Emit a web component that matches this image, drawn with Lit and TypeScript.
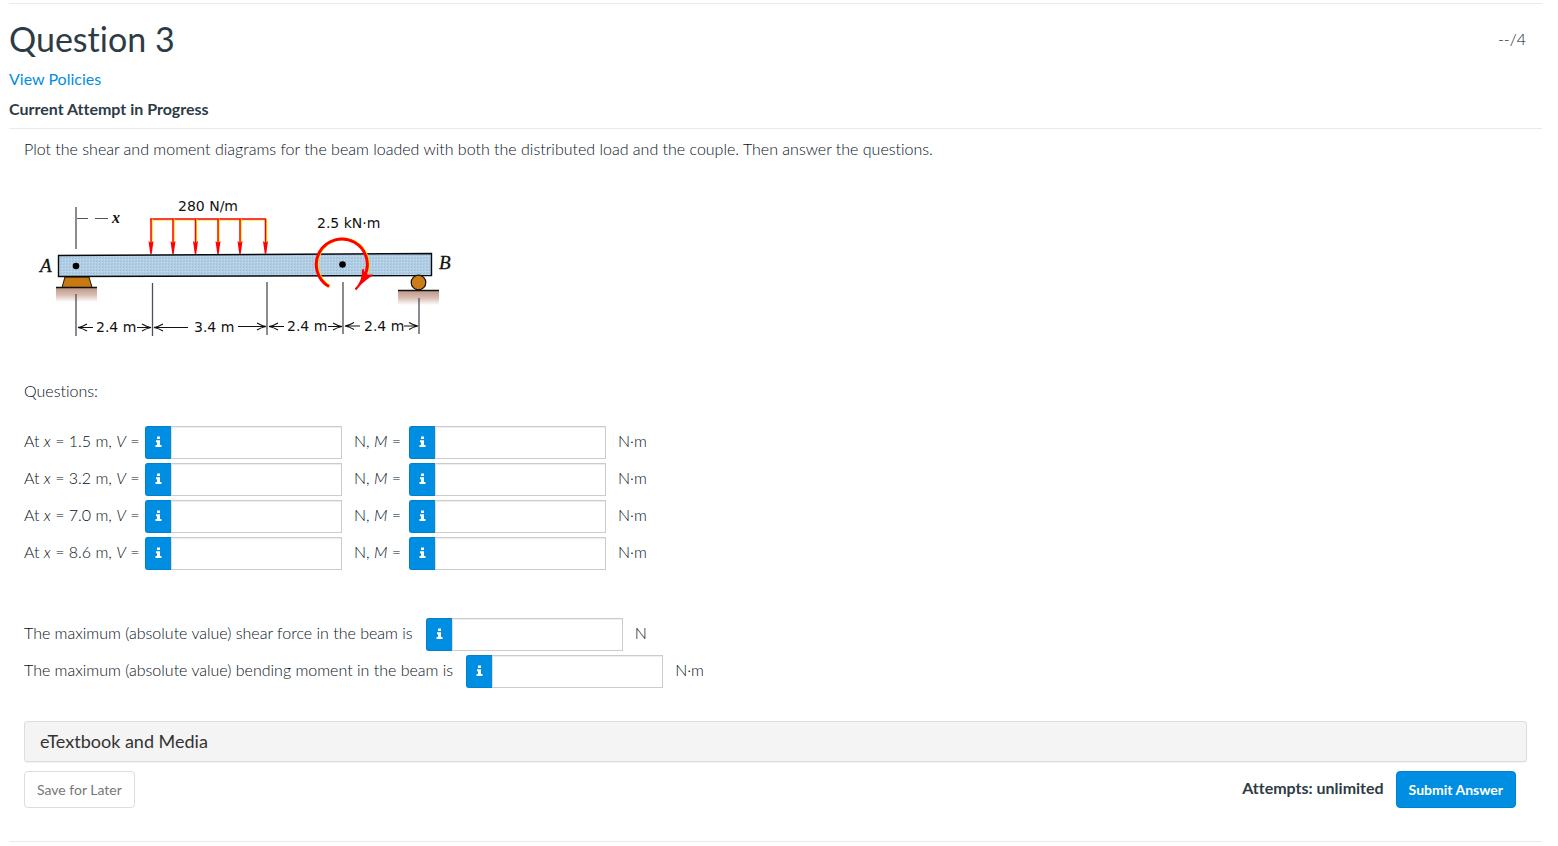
import { LitElement, html, svg, css } from "lit";
import { customElement, property } from "lit/decorators.js";

@customElement("beam-diagram")
class BeamDiagram extends LitElement {
  static styles = css`
    :host { display: block; }
    .drawing { display: block; width: 440px; height: 150px; }
    .value { font-family: "DejaVu Sans", sans-serif; font-size: 14px; fill: #111; }
    .point { font-family: "Liberation Serif", serif; font-style: italic; font-size: 19px; fill: #111; stroke: #111; stroke-width: 0.3; }
    .axis { font-family: "Liberation Serif", serif; font-style: italic; font-weight: bold; font-size: 16px; fill: #111; }
  `;

  private load(x: number) {
    return svg`
      <path d="M${x + 1} 219V243" stroke="#ffe600" stroke-width="1.4"/>
      <path d="M${x} 219V243" stroke="#f00" stroke-width="1.5"/>
      <path d="M${x - 2.5} 241L${x} 243L${x + 2.5} 241L${x + 0.7} 254H${x - 0.7}Z" fill="#f00"/>`;
  }

  private arrow(from: number, to: number, y: number) {
    const d = to > from ? -1 : 1;
    return svg`<path d="M${from} ${y}H${to}M${to + d * 9} ${y - 3.5}Q${to + d * 5} ${y - 1} ${to} ${y}Q${to + d * 5} ${y + 1} ${to + d * 9} ${y + 3.5}" fill="none" stroke="#111" stroke-width="1.1"/>`;
  }

  render() {
    return html`
      <svg class="drawing" viewBox="24 190 440 150" role="img" aria-label="Simply supported beam with a distributed load and a couple">
        <defs>
          <linearGradient id="ground" x1="0" y1="0" x2="0" y2="1">
            <stop offset="0" stop-color="#bd9a8b"/>
            <stop offset="0.5" stop-color="#d9bdb2"/>
            <stop offset="1" stop-color="#fff"/>
          </linearGradient>
          <pattern id="grain" width="3" height="3" patternUnits="userSpaceOnUse">
            <rect width="3" height="3" fill="#b3cfe4"/>
            <rect width="1" height="1" fill="#9abbd9"/>
            <rect x="2" y="1" width="1" height="1" fill="#c3dbea"/>
            <rect x="1" y="2" width="1" height="1" fill="#a3c3e0"/>
          </pattern>
        </defs>
        <rect x="56" y="288" width="41" height="14" fill="url(#ground)"/>
        <rect x="398" y="291" width="41" height="14" fill="url(#ground)"/>
        <path d="M65 277H89L92 287.500H62Z" fill="#c97912" stroke="#1a1208"/>
        <path d="M56 287.500H97M398 290.500H439" stroke="#111" stroke-width="1.3"/>
        <path d="M58.500 255.500L431.500 253.500V275.500L58.500 276.500Z" fill="url(#grain)" stroke="#080c10" stroke-width="1.4"/>
        <circle cx="418.500" cy="282.500" r="7.300" fill="#cc7d18" stroke="#111" stroke-width="1.2"/>
        <circle cx="76" cy="266" r="3.300"/>
        <circle cx="342.500" cy="264.500" r="3.300"/>
        <path d="M76 207V249M76 294V336M152.500 283V336M267 282V335M343 282V334M419 298V334" stroke="#4a4f58" stroke-width="1.3"/>
        <path d="M77 218.500H88M95 218.500H108" stroke="#555" stroke-width="1.2"/>
        <path d="M151 220H266" stroke="#ffe600" stroke-width="1.2"/>
        <path d="M150 219H266" stroke="#f00" stroke-width="1.5"/>
        ${[151, 173, 195.5, 218, 240, 265.5].map((x) => this.load(x))}
        <path d="M329 286.500A25.500 25.500 0 1 1 364 277" fill="none" stroke="#ffe600" stroke-width="2.800" transform="translate(1 0)"/>
        <path d="M329 286.500A25.500 25.500 0 1 1 364 277" fill="none" stroke="#f00" stroke-width="3"/>
        <path d="M363 269.500C363.500 277 361 284 355.500 289.500" fill="none" stroke="#f00" stroke-width="2"/>
        <path d="M363 269.500C363.500 277 361 284 355.500 289C360 284.500 366 278 372.500 275C368 276 364 275 363 269.500Z" fill="#f00" stroke="#f00" stroke-width="1.400"/>
        ${this.arrow(93, 78, 327.5)}
        ${this.arrow(137, 151, 327.5)}
        ${this.arrow(188, 154, 327.5)}
        ${this.arrow(238, 266, 326.5)}
        ${this.arrow(284, 269, 326.5)}
        ${this.arrow(328, 342, 326.5)}
        ${this.arrow(360, 345, 326)}
        ${this.arrow(404, 418, 326)}
        <text class="axis" x="112" y="223">x</text>
        <text class="point" x="40" y="272">A</text>
        <text class="point" x="439" y="269">B</text>
        <text class="value" x="178" y="211">280 N/m</text>
        <text class="value" x="317" y="228">2.5 kN·m</text>
        <text class="value" x="96" y="332">2.4 m</text>
        <text class="value" x="194" y="332">3.4 m</text>
        <text class="value" x="287" y="331">2.4 m</text>
        <text class="value" x="364" y="331">2.4 m</text>
      </svg>`;
  }
}

@customElement("answer-field")
class AnswerField extends LitElement {
  @property() label = "";

  static styles = css`
    :host { display: inline-flex; flex: none; }
    .info {
      display: flex; align-items: center; justify-content: center;
      box-sizing: border-box; width: 26px; height: 33px; padding: 0 0 2px;
      background: #008ee2; border: 1px solid #0081cd; border-right: 0;
      border-radius: 3px 0 0 3px; cursor: pointer;
    }
    .glyph { width: 7px; height: 11px; fill: #fff; display: block; }
    .entry {
      box-sizing: border-box; width: 171px; height: 33px; margin: 0; padding: 4px 8px;
      border: 1px solid #ccc; border-left-color: #ddd; border-radius: 0; background: #fff;
      box-shadow: inset 0 1px 1px rgba(0, 0, 0, 0.075);
      font: 16px/20px Lato, sans-serif; color: #2d3b45;
    }
  `;

  render() {
    return html`
      <button class="info" type="button" aria-label="Answer format for ${this.label}">
        <svg class="glyph" viewBox="0 0 7 11" aria-hidden="true">
          <path d="M2 0.500H5V3H2ZM1 4.300H5V9H6.500V11H0.500V9H2V6.200H1Z"/>
        </svg>
      </button>
      <input class="entry" type="text" aria-label=${this.label} />`;
  }
}

@customElement("app-root")
class AppRoot extends LitElement {
  static styles = css`
    :host { display: block; font: 16px/24px Lato, sans-serif; font-variant-ligatures: none; color: #2d3b45; background: #fff; }
    .page { margin: 3px 16px 0 9px; border-top: 1px solid #e8eaec; border-bottom: 1px solid #e8eaec; }
    .top { display: flex; justify-content: space-between; align-items: center; padding: 16px 16px 0 0; }
    .title { margin: 0; font-size: 34px; line-height: 38px; font-weight: 400; }
    .policies { padding-top: 9px; }
    .link { color: #008ee2; text-decoration: none; }
    .status { margin: 0; padding: 6px 0 7px; font-size: 16px; line-height: 24px; font-weight: 700; border-bottom: 1px solid #e8eaec; }
    .body { padding: 8px 15px 33px; }
    .text { margin: 0; }
    .prose { font-weight: 300; color: #06121c; }
    .figure { margin-top: 29px; }
    .questions { margin-top: 39px; }
    .rows { display: flex; flex-direction: column; gap: 4px; margin-top: 23px; }
    .extremes { margin-top: 48px; }
    .row { display: flex; align-items: flex-start; line-height: 30px; white-space: nowrap; }
    .shear { width: 121px; }
    .moment { box-sizing: border-box; width: 67px; padding-left: 12px; }
    .unit { padding-left: 12px; }
    .lead { padding-right: 13px; }
    .media {
      display: block; box-sizing: border-box; width: 100%; margin: 33px 0 0; padding: 6px 15px 7px;
      font: 18px/26px Lato, sans-serif; color: #333; text-align: left;
      background: #f4f4f4; border: 1px solid #ddd; border-radius: 3px;
      box-shadow: 0 1px 1px rgba(0, 0, 0, 0.05);
    }
    .actions { display: flex; justify-content: space-between; align-items: center; padding-right: 11px; margin-top: 9px; }
    .submission { display: flex; align-items: flex-start; gap: 12px; }
    .attempts { font-weight: 700; line-height: 34px; }
    .button { box-sizing: border-box; height: 37px; padding: 0 12px; border-radius: 4px; font: 14px/20px Lato, sans-serif; }
    .save { color: #777; background: #fff; border: 1px solid #ddd; }
    .submit { color: #fff; background: #008ee2; border: 1px solid #0081cd; font-weight: 700; }
  `;

  private positions = ["1.5", "3.2", "7.0", "8.6"];

  render() {
    return html`
      <main class="page">
        <header class="top">
          <h1 class="title">Question 3</h1>
          <span class="prose">--/4</span>
        </header>
        <div class="policies"><a class="link" href="#policies">View Policies</a></div>
        <h2 class="status">Current Attempt in Progress</h2>
        <section class="body">
          <p class="text prose">Plot the shear and moment diagrams for the beam loaded with both the distributed load and the couple. Then answer the questions.</p>
          <beam-diagram class="figure"></beam-diagram>
          <p class="text prose questions">Questions:</p>
          <div class="rows prose">
            ${this.positions.map((x) => html`
              <div class="row">
                <span class="shear">At <i>x</i> = ${x} m, <i>V</i> =</span>
                <answer-field label="V in newtons at x = ${x} m"></answer-field>
                <span class="moment">N, <i>M</i> =</span>
                <answer-field label="M in newton metres at x = ${x} m"></answer-field>
                <span class="unit">N·m</span>
              </div>`)}
          </div>
          <div class="rows prose extremes">
            <div class="row">
              <span class="lead">The maximum (absolute value) shear force in the beam is</span>
              <answer-field label="Maximum shear force in newtons"></answer-field>
              <span class="unit">N</span>
            </div>
            <div class="row">
              <span class="lead">The maximum (absolute value) bending moment in the beam is</span>
              <answer-field label="Maximum bending moment in newton metres"></answer-field>
              <span class="unit">N·m</span>
            </div>
          </div>
          <button class="media" type="button">eTextbook and Media</button>
          <div class="actions">
            <button class="button save" type="button">Save for Later</button>
            <div class="submission">
              <span class="attempts">Attempts: unlimited</span>
              <button class="button submit" type="button">Submit Answer</button>
            </div>
          </div>
        </section>
      </main>`;
  }
}
